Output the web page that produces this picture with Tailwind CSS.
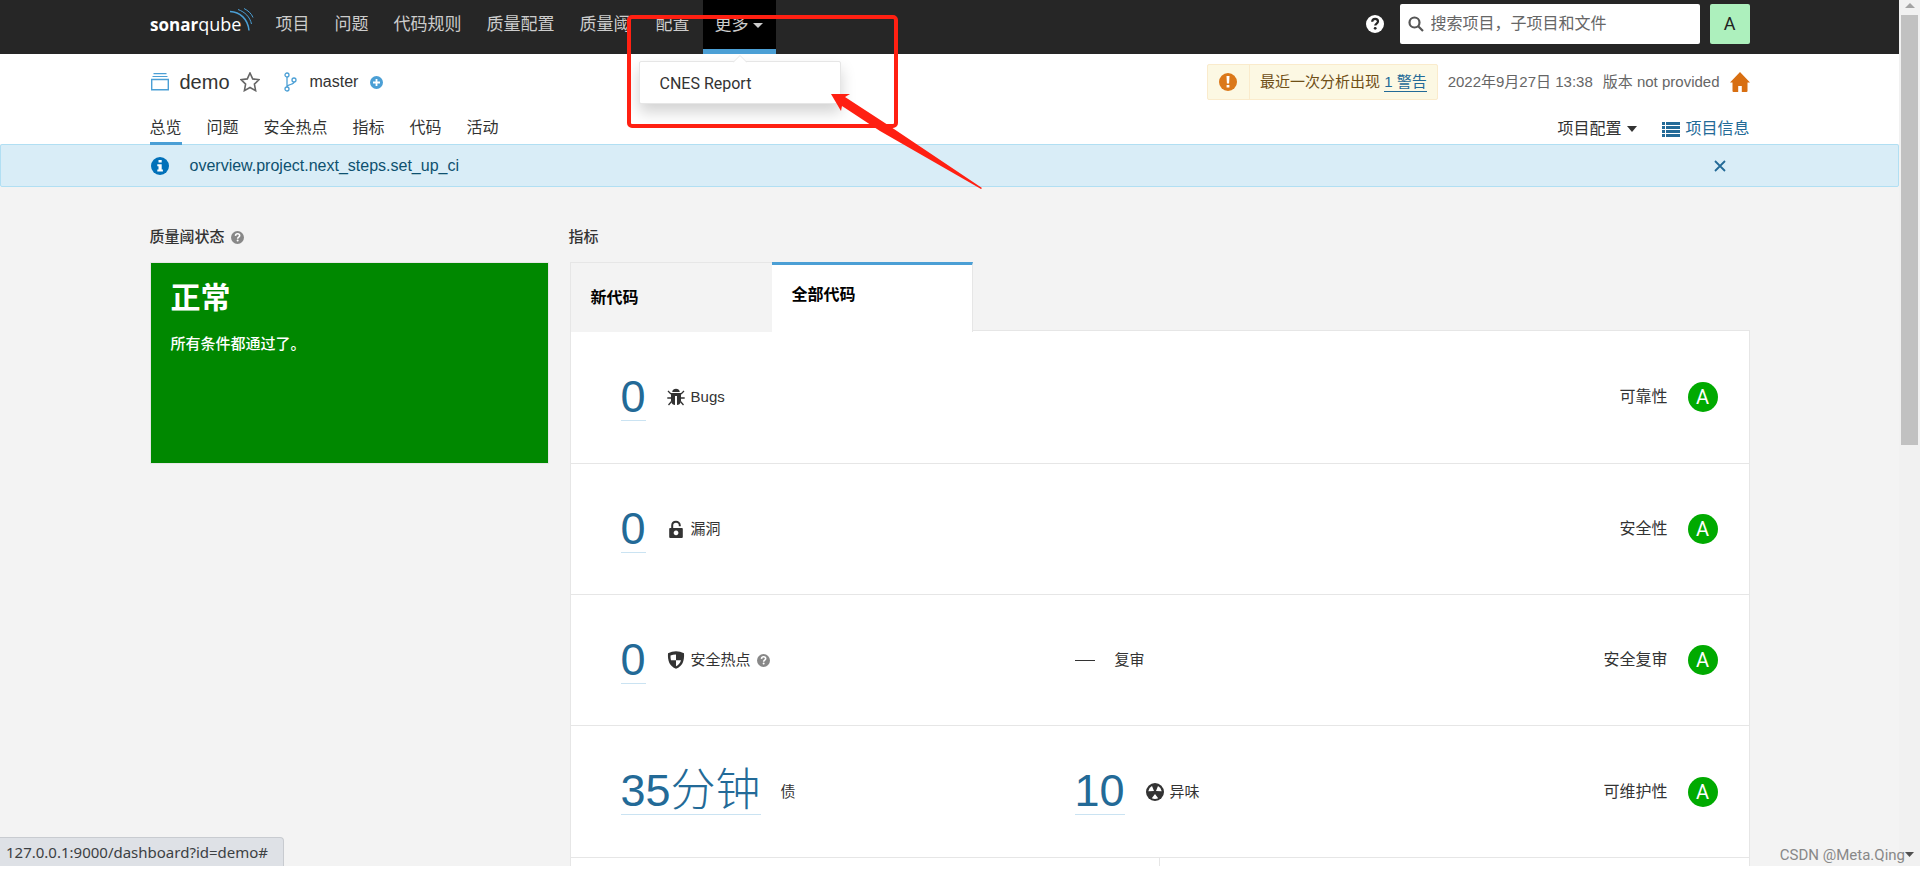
<!DOCTYPE html>
<html lang="zh">
<head>
    <meta charset="UTF-8">
    <meta name="viewport" content="width=device-width, initial-scale=1.0">
    <title>demo</title>
    <script src="https://cdn.jsdelivr.net/npm/@tailwindcss/browser@4"></script>
</head>
<body class="h-screen overflow-hidden bg-white pb-[6px] font-['Liberation_Sans','Noto_Sans_CJK_SC',sans-serif] text-[16px] leading-[24px] text-[#333]">

<div class="relative flex h-full overflow-hidden bg-[#f3f3f3]">
  <div class="h-full min-w-0 flex-1 overflow-hidden">

    <!-- 顶部导航 -->
    <header class="h-[54px] bg-[#262626]">
      <div class="mx-auto flex h-full max-w-[1600px]">
        <a href="#" class="mt-[8px] block h-[28px] w-[104px] text-white" aria-label="sonarqube">
          <svg width="104" height="28" viewBox="0 0 104 28">
            <text x="0" y="23" font-family="Open Sans, sans-serif" fill="#fff"><tspan font-size="17" font-weight="700">sonar</tspan><tspan font-size="18">qube</tspan></text>
            <g fill="none" stroke="#4b9fd5" stroke-width="1">
              <path d="M80 3.500C90 4 98 11 99 22.500" stroke-width="1.500"/>
              <path d="M88 1.500C95 4 100 9 101.500 16"/>
              <path d="M94 .5C98 2.500 101.500 5.500 103 9.500"/>
            </g>
          </svg>
        </a>
        <nav class="ml-[10px] flex text-[17px] leading-[50px] text-[#ccc]">
          <a href="#" class="pr-[13px] pl-[12px]">项目</a>
          <a href="#" class="pr-[13px] pl-[12px]">问题</a>
          <a href="#" class="pr-[13px] pl-[12px]">代码规则</a>
          <a href="#" class="pr-[13px] pl-[12px]">质量配置</a>
          <a href="#" class="pr-[13px] pl-[12px]">质量阈</a>
          <a href="#" class="pr-[13px] pl-[12px]">配置</a>
          <div class="relative">
            <button type="button" class="flex h-[54px] items-start border-b-[5px] border-[#4b9fd5] bg-black pr-[13px] pl-[12px]">
              更多
              <svg class="mt-[23px] ml-[4px]" width="10" height="6" viewBox="0 0 10 6"><path d="M0 0h10L5 5z" fill="#ccc"/></svg>
            </button>
            <div class="absolute top-[61px] -left-[64px] z-10 h-[43px] w-[202px] rounded-[2px] border border-[#e6e6e6] bg-white px-5 text-[16px] leading-[43px] text-[#333] shadow-[0_8px_15px_rgba(0,0,0,0.18)]">
              <svg class="absolute -top-[7px] left-[93px]" width="14" height="8" viewBox="0 0 14 8"><path d="M0 7.500L7 .5l7 7" fill="#fff" stroke="#e6e6e6"/></svg>
              <a href="#" class="block font-['Roboto',sans-serif]">CNES Report</a>
            </div>
          </div>
        </nav>
        <div class="ml-auto flex items-start pt-[4px]">
          <svg class="mt-[11px] mr-[16px]" width="18" height="18" viewBox="0 0 18 18"><circle cx="9" cy="9" r="9" fill="#fff"/><path d="M6.200 6.800C6.400 2.800 12 3.200 12 6.500 12 8.500 9.200 8.600 9.200 10.600" fill="none" stroke="#262626" stroke-width="2.200"/><circle cx="9.200" cy="13.300" r="1.400" fill="#262626"/></svg>
          <label class="flex h-[40px] w-[300px] items-center rounded-[2px] bg-white pl-[8px]">
            <svg width="16" height="16" viewBox="0 0 16 16" fill="none" stroke="#555" stroke-width="2.200"><circle cx="6.500" cy="6.500" r="5"/><path d="M10.200 10.200L15 15"/></svg>
            <input type="text" aria-label="搜索" placeholder="搜索项目，子项目和文件" class="ml-[7px] w-[250px] bg-transparent text-[16px] outline-none placeholder:text-[#666]">
          </label>
          <button type="button" class="ml-[10px] h-[40px] w-[40px] rounded-[2px] bg-[#adf0bd] font-['Roboto',sans-serif] text-[18px] text-[#222]">A</button>
        </div>
      </div>
    </header>

    <!-- 项目信息 -->
    <div class="h-[90px] bg-white">
      <div class="mx-auto flex h-full max-w-[1600px] flex-col">
        <div class="flex h-[56px] items-center">
          <svg width="20" height="18" viewBox="0 0 20 18" fill="none" stroke="#4b9fd5"><path d="M1.700 6.500h16.600v10.200H1.700z" stroke-width="1.400"/><path d="M2.500 3.500h15M3.500.7h13" stroke-width="1.200"/></svg>
          <a href="#" class="ml-[10px] text-[20px]">demo</a>
          <svg class="ml-[10px]" width="20" height="20" viewBox="0 0 20 20"><path d="M10 1l2.700 5.900 6.300.8-4.600 4.400 1.200 6.500L10 15.500l-5.600 3.100 1.200-6.500L1 7.700l6.300-.8z" fill="none" stroke="#666" stroke-width="1.600"/></svg>
          <svg class="ml-[24px]" width="13" height="20" viewBox="0 0 13 20" fill="none" stroke="#4b9fd5" stroke-width="1.300"><circle cx="3" cy="3" r="2"/><circle cx="3" cy="17" r="2"/><circle cx="10" cy="8" r="2"/><path d="M3 5v10M10 10c0 3-7 2-7 5"/></svg>
          <a href="#" class="ml-[13px] text-[16px]">master</a>
          <svg class="ml-[12px]" width="13" height="13" viewBox="0 0 13 13"><circle cx="6.500" cy="6.500" r="6.500" fill="#4b9fd5"/><path d="M6.500 3v7M3 6.500h7" stroke="#fff" stroke-width="1.800"/></svg>

          <div class="ml-auto flex h-[36px] items-center rounded-[2px] border border-[#faebcc] bg-[#fcf8e3] text-[15px] text-[#6f4f17]">
            <span class="flex h-full w-[42px] items-center justify-center border-r border-[#faebcc]">
              <svg width="18" height="18" viewBox="0 0 18 18"><circle cx="9" cy="9" r="9" fill="#db781a"/><path d="M7.500 3h3l-.4 7.500H7.900zM7.600 12h2.800v2.500H7.600z" fill="#fff"/></svg>
            </span>
            <span class="px-[10px]">最近一次分析出现 <a href="#" class="inline-block border-b border-[#236a97] leading-[19px] text-[#236a97]">1 警告</a></span>
          </div>
          <span class="ml-[10px] text-[15px] text-[#666]">2022年9月27日 13:38</span>
          <span class="ml-[10px] text-[15px] text-[#666]">版本 not provided</span>
          <svg class="ml-[10px]" width="20" height="20" viewBox="0 0 20 20"><path d="M10 0l10 10.500h-2.500V19q0 1-1 1h-4.700v-6H8.200v6H3.500q-1 0-1-1v-8.500H0z" fill="#d86f12"/></svg>
        </div>
        <div class="flex h-[34px]">
          <nav class="flex gap-[25px] text-[16px]">
            <a href="#" class="h-[35px] border-b-[3px] border-[#4b9fd5] pt-[6px]">总览</a>
            <a href="#" class="pt-[6px]">问题</a>
            <a href="#" class="pt-[6px]">安全热点</a>
            <a href="#" class="pt-[6px]">指标</a>
            <a href="#" class="pt-[6px]">代码</a>
            <a href="#" class="pt-[6px]">活动</a>
          </nav>
          <button type="button" class="ml-auto flex items-center pt-[4px]">项目配置
            <svg class="ml-[6px]" width="10" height="6" viewBox="0 0 10 6"><path d="M0 0h10L5 6z" fill="#333"/></svg>
          </button>
          <a href="#" class="ml-[25px] flex items-center pt-[4px] text-[#236a97]">
            <svg class="mr-[5px]" width="18" height="15" viewBox="0 0 18 15"><path d="M0 1.500h3M4 1.500h14M0 5.500h3M4 5.500h14M0 9.500h3M4 9.500h14M0 13.500h3M4 13.500h14" stroke="#236a97" stroke-width="2.800"/></svg>
            项目信息
          </a>
        </div>
      </div>
    </div>

    <!-- 提示 -->
    <div class="h-[43px] rounded-[2px] border border-[#b1dff3] bg-[#d9edf7] text-[#0e516f]">
      <div class="mx-auto flex h-full max-w-[1600px] items-center">
        <svg class="ml-[1px]" width="18" height="18" viewBox="0 0 18 18"><circle cx="9" cy="9" r="9" fill="#0271b9"/><path d="M7.500 3h3.200v2.600H7.500zM6.300 7.200h4.400v5.300h1.200v2H6.300v-2h1.200V9.200H6.300z" fill="#fff"/></svg>
        <span class="ml-[21px]">overview.project.next_steps.set_up_ci</span>
        <button type="button" aria-label="关闭" class="mr-[24px] ml-auto"><svg width="12" height="12" viewBox="0 0 12 12"><path d="M1 1l10 10M11 1L1 11" stroke="#236a97" stroke-width="1.800"/></svg></button>
      </div>
    </div>

    <main class="mx-auto flex max-w-[1600px] pt-[39px]">
      <!-- 质量阈 -->
      <section class="w-[399px] shrink-0">
        <h2 class="flex items-center text-[15px] leading-[22px] font-medium">质量阈状态
          <svg class="ml-[6px]" width="13" height="13" viewBox="0 0 18 18"><circle cx="9" cy="9" r="9" fill="#888"/><path d="M6.200 6.800C6.400 2.800 12 3.200 12 6.500 12 8.500 9.200 8.600 9.200 10.600" fill="none" stroke="#fff" stroke-width="2.200"/><circle cx="9.200" cy="13.300" r="1.400" fill="#fff"/></svg>
        </h2>
        <div class="mt-[14px] h-[202px] border border-[#e6e6e6] bg-[#080] px-5 text-white">
          <div class="pt-[15px] text-[30px] leading-[40px] font-bold">正常</div>
          <p class="pt-[14px] text-[15px] font-medium">所有条件都通过了。</p>
        </div>
      </section>

      <!-- 指标 -->
      <section class="ml-[20px] min-w-0 flex-1">
        <h2 class="text-[15px] leading-[22px] font-medium">指标</h2>
        <div class="relative z-1 mt-[14px] -mb-[2px] ml-[1px] flex h-[70px] text-[16px] font-bold text-black">
          <button type="button" class="w-[202px] border-t border-l border-[#e6e6e6] bg-[#f3f3f3] px-5 text-left">新代码</button>
          <button type="button" class="w-[201px] border-t-[3px] border-r border-t-[#4b9fd5] border-r-[#e6e6e6] bg-white px-5 pb-[8px] text-left">全部代码</button>
        </div>
        <div class="ml-[1px] border border-[#e6e6e6] bg-white">
          <div class="flex h-[133px] items-center border-b border-[#e6e6e6] pr-[31px] pl-[50px]">
            <div class="flex flex-1 items-center">
              <a href="#" class="border-b border-[#cae3f2] text-[45px] leading-[46px] text-[#236a97]">0</a>
              <svg class="ml-[21px]" width="18" height="18" viewBox="0 0 18 18"><path d="M5.200 4C5.600-.3 12.400-.3 12.800 4zM4 5h10v8c-.5 3-2.500 4-4 4V8H8v9c-1.500 0-3.500-1-4-4z" fill="#333"/><path d="M1 3l3 3M17 3l-3 3M.3 10h4M17.700 10h-4M1.500 17l3-3.500M16.500 17l-3-3.500" stroke="#333" stroke-width="1.300"/></svg>
              <span class="ml-[6px] text-[15px]">Bugs</span>
            </div>
            <span>可靠性</span>
            <span class="ml-[20px] flex h-[30px] w-[30px] items-center justify-center rounded-full bg-[#0a0] font-['Roboto',sans-serif] text-[20px] text-white">A</span>
          </div>
          <div class="flex h-[131px] items-center border-b border-[#e6e6e6] pr-[31px] pl-[50px]">
            <div class="flex flex-1 items-center">
              <a href="#" class="border-b border-[#cae3f2] text-[45px] leading-[46px] text-[#236a97]">0</a>
              <svg class="ml-[21px]" width="18" height="18" viewBox="0 0 18 18"><path d="M5.200 8.500V5.500c0-5 7.600-5 7.600 0v.7" fill="none" stroke="#333" stroke-width="2"/><path fill-rule="evenodd" d="M3 8h12q.8 0 .8 1v8q0 1-1 1H3.200q-1 0-1-1V9q0-1 .8-1zm6 2.500a2.400 2.400 0 1 0 .1 0z" fill="#333"/></svg>
              <span class="ml-[6px] text-[15px]">漏洞</span>
            </div>
            <span>安全性</span>
            <span class="ml-[20px] flex h-[30px] w-[30px] items-center justify-center rounded-full bg-[#0a0] font-['Roboto',sans-serif] text-[20px] text-white">A</span>
          </div>
          <div class="flex h-[131px] items-center border-b border-[#e6e6e6] pr-[31px] pl-[50px]">
            <div class="flex w-[454px] items-center">
              <a href="#" class="border-b border-[#cae3f2] text-[45px] leading-[46px] text-[#236a97]">0</a>
              <svg class="ml-[21px]" width="18" height="18" viewBox="0 0 18 18"><path d="M9 .2q4 .2 8 2C17.500 10 15.500 15 9 17.700 2.500 15 .5 10 1 2.200Q5 .4 9 .2z" fill="#333"/><path d="M9 3.500v5.700H4Q3.400 7 3.500 4.600 6 3.600 9 3.500zM9 9.200h5C13.200 12 11.600 13.900 9 15.300z" fill="#fff"/></svg>
              <span class="ml-[6px] text-[15px]">安全热点</span>
              <svg class="ml-[6px]" width="13" height="13" viewBox="0 0 18 18"><circle cx="9" cy="9" r="9" fill="#888"/><path d="M6.200 6.800C6.400 2.800 12 3.200 12 6.500 12 8.500 9.200 8.600 9.200 10.600" fill="none" stroke="#fff" stroke-width="2.200"/><circle cx="9.200" cy="13.300" r="1.400" fill="#fff"/></svg>
            </div>
            <div class="flex flex-1 items-center">
              <span class="h-px w-[20px] bg-[#333]"></span>
              <span class="ml-[20px] text-[15px]">复审</span>
            </div>
            <span>安全复审</span>
            <span class="ml-[20px] flex h-[30px] w-[30px] items-center justify-center rounded-full bg-[#0a0] font-['Roboto',sans-serif] text-[20px] text-white">A</span>
          </div>
          <div class="flex h-[132px] items-center border-b border-[#e6e6e6] pr-[31px] pl-[50px]">
            <div class="flex w-[454px] items-center">
              <a href="#" class="border-b border-[#cae3f2] text-[45px] leading-[46px] font-light text-[#236a97]">35分钟</a>
              <span class="ml-[20px] text-[15px]">债</span>
            </div>
            <div class="flex flex-1 items-center">
              <a href="#" class="border-b border-[#cae3f2] text-[45px] leading-[46px] text-[#236a97]">10</a>
              <svg class="ml-[21px]" width="18" height="18" viewBox="0 0 18 18"><circle cx="9" cy="9" r="9" fill="#333"/><path d="M8 8L2.300 8.200A7 7 0 0 1 6 3zM10 8l5.700.2A7 7 0 0 0 12 3zM9 11l3.200 4.300a7 7 0 0 1-6.400 0z" fill="#fff"/></svg>
              <span class="ml-[6px] text-[15px]">异味</span>
            </div>
            <span>可维护性</span>
            <span class="ml-[20px] flex h-[30px] w-[30px] items-center justify-center rounded-full bg-[#0a0] font-['Roboto',sans-serif] text-[20px] text-white">A</span>
          </div>
          <div class="grid h-[132px] grid-cols-2">
            <div class="border-r border-[#e6e6e6]"></div>
          </div>
        </div>
      </section>
    </main>
  </div>

  <!-- 滚动条 -->
  <div class="flex w-[21px] shrink-0 flex-col items-center bg-[#f1f1f1]">
    <svg class="mt-[3px]" width="10" height="5" viewBox="0 0 10 5"><path d="M5 0l5 5H0z" fill="#a3a3a3"/></svg>
    <div class="mt-[7px] h-[430px] w-[17px] bg-[#c1c1c1]"></div>
    <svg class="mt-auto mb-[9px]" width="9" height="5" viewBox="0 0 9 5"><path d="M0 0h9L4.500 5z" fill="#505050"/></svg>
  </div>

  <!-- 标注 -->
  <div class="absolute top-[15px] left-[627px] z-20 h-[113px] w-[271px] rounded-[5px] border-4 border-[#ff2012]"></div>
  <svg class="absolute top-[93px] left-[830px] z-20" width="155" height="97" viewBox="0 0 155 97"><path d="M1 1l19 0-5 3 43 28 94 63-1 1L50 38 12 13l-1 5z" fill="#ff2012"/></svg>

  <div class="absolute bottom-0 left-0 z-20 h-[29px] w-[284px] rounded-tr-[4px] border-t border-r border-[#c8cbd0] bg-[#dee1e6] pl-[6px] font-['Noto_Sans',sans-serif] text-[15px] leading-[28px] text-[#3c4043]">127.0.0.1:9000/dashboard?id=demo#</div>
  <div class="absolute right-[15px] bottom-0 z-20 font-['Roboto',sans-serif] text-[15px] leading-[22px] text-[#888]">CSDN @Meta.Qing</div>
</div>

</body>
</html>
